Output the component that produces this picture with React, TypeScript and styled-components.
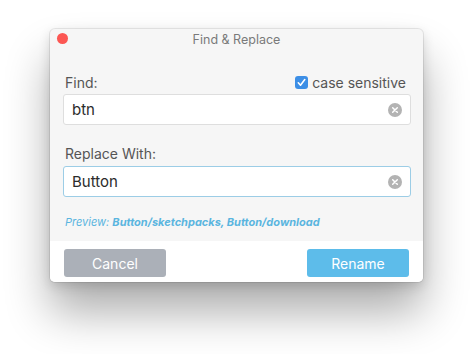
import React, { useState } from "react";
import styled, { createGlobalStyle } from "styled-components";

const GlobalStyle = createGlobalStyle`
  html, body {
    margin: 0;
    padding: 0;
    background: #ffffff;
  }
  body {
    font-family: Inter, "Noto Sans", "Liberation Sans", sans-serif;
    -webkit-font-smoothing: antialiased;
  }
`;

const ClearIcon: React.FC = () => (
  <svg width="14" height="14" viewBox="0 0 14 14">
    <circle cx="7" cy="7" r="7" fill="#b3b3b3" />
    <path d="M4.7 4.7 L9.3 9.3 M9.3 4.7 L4.7 9.3" stroke="#fff" strokeWidth="1.5" strokeLinecap="round" />
  </svg>
);

const CheckIcon: React.FC = () => (
  <svg width="13" height="13" viewBox="0 0 13 13">
    <rect x="0" y="0" width="13" height="13" rx="3" fill="#3d8fe6" />
    <path d="M3.3 6.8 L5.5 9.2 L9.8 3.6" stroke="#fff" strokeWidth="1.6" fill="none" strokeLinecap="round" strokeLinejoin="round" />
  </svg>
);

export default function App() {
  const [find, setFind] = useState("btn");
  const [replace, setReplace] = useState("Button");
  const [caseSensitive, setCaseSensitive] = useState(true);

  return (
    <Page>
      <GlobalStyle />
      <Window>
        <TitleBar>
          <CloseDot />
          <Title>Find &amp; Replace</Title>
        </TitleBar>

        <Body>
          <LabelRow>
            <Label>Find:</Label>
            <CheckLabel onClick={() => setCaseSensitive(!caseSensitive)}>
              {caseSensitive ? <CheckIcon /> : <EmptyBox />}
              <span>case sensitive</span>
            </CheckLabel>
          </LabelRow>
          <Field>
            <Input value={find} onChange={(e) => setFind(e.target.value)} />
            <ClearButton onClick={() => setFind("")}>
              <ClearIcon />
            </ClearButton>
          </Field>

          <LabelRow $spaced>
            <Label>Replace With:</Label>
          </LabelRow>
          <Field $focused>
            <Input value={replace} onChange={(e) => setReplace(e.target.value)} />
            <ClearButton onClick={() => setReplace("")}>
              <ClearIcon />
            </ClearButton>
          </Field>

          <Preview>
            Preview: <strong>Button/sketchpacks, Button/download</strong>
          </Preview>
        </Body>

        <Footer>
          <Button $variant="cancel">Cancel</Button>
          <Button $variant="primary">Rename</Button>
        </Footer>
      </Window>
    </Page>
  );
}

const Page = styled.div`
  width: 474px;
  height: 354px;
  padding: 29px 0 0 50px;
  box-sizing: border-box;
`;

const Window = styled.div`
  width: 373px;
  height: 253px;
  display: flex;
  flex-direction: column;
  border-radius: 5px;
  overflow: hidden;
  background: #f6f6f6;
  box-shadow: 0 0 0 1px rgba(0, 0, 0, 0.08), 0 30px 45px rgba(0, 0, 0, 0.32), 0 4px 12px rgba(0, 0, 0, 0.14);
`;

const TitleBar = styled.div`
  position: relative;
  height: 20px;
  display: flex;
  align-items: center;
  justify-content: center;
`;

const CloseDot = styled.div`
  position: absolute;
  left: 7px;
  top: 4px;
  width: 11px;
  height: 11px;
  border-radius: 50%;
  background: #fc5753;
`;

const Title = styled.div`
  font-size: 12.5px;
  color: #7a7a7a;
  margin-top: 1px;
`;

const Body = styled.div`
  flex: 1;
  padding: 24px 12px 0 13px;
  display: flex;
  flex-direction: column;
`;

const LabelRow = styled.div<{ $spaced?: boolean }>`
  display: flex;
  align-items: center;
  justify-content: space-between;
  height: 18px;
  margin-top: ${(p) => (p.$spaced ? "19px" : "0")};
  margin-bottom: ${(p) => (p.$spaced ? "4px" : "3px")};
`;

const Label = styled.div`
  font-size: 14px;
  color: #555555;
  padding-left: 2px;
`;

const CheckLabel = styled.label`
  display: flex;
  align-items: center;
  gap: 4px;
  font-size: 14px;
  color: #555555;
  cursor: pointer;
  margin-right: 5px;
`;

const EmptyBox = styled.span`
  width: 13px;
  height: 13px;
  border-radius: 3px;
  border: 1px solid #aaa;
  box-sizing: border-box;
  background: #fff;
`;

const Field = styled.div<{ $focused?: boolean }>`
  display: flex;
  align-items: center;
  height: 31px;
  box-sizing: border-box;
  background: #ffffff;
  border: 1px solid ${(p) => (p.$focused ? "#9ccde6" : "#dedede")};
  border-radius: 3px;
  padding: 0 8px 0 8px;
`;

const Input = styled.input`
  flex: 1;
  border: none;
  outline: none;
  background: transparent;
  font-family: Inter, "Noto Sans", "Liberation Sans", sans-serif;
  font-size: 15px;
  color: #2b2b2b;
  padding: 0;
`;

const ClearButton = styled.span`
  display: flex;
  cursor: pointer;
`;

const Preview = styled.div`
  margin-top: 18px;
  font-size: 11px;
  font-style: italic;
  color: #5ab5df;
  padding-left: 2px;

  strong {
    font-weight: 700;
  }
`;

const Footer = styled.div`
  height: 41px;
  box-sizing: border-box;
  background: #ffffff;
  padding: 8px 14px 5px 14px;
  display: flex;
  justify-content: space-between;
`;

const Button = styled.button<{ $variant: "cancel" | "primary" }>`
  width: 102px;
  height: 28px;
  border: none;
  border-radius: 3px;
  font-family: Inter, "Noto Sans", "Liberation Sans", sans-serif;
  font-size: 14px;
  color: #ffffff;
  background: ${(p) => (p.$variant === "cancel" ? "#abb0b8" : "#5dbcea")};
  cursor: pointer;
`;
